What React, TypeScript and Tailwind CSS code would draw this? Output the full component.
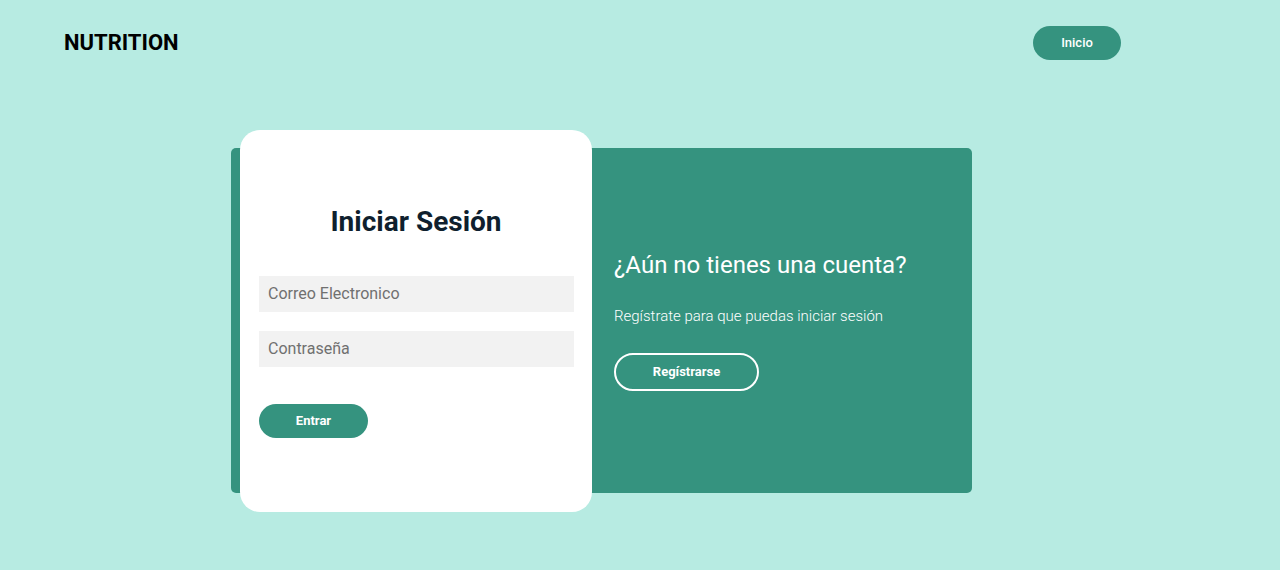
import React from "react";

export default function App() {
  return (
    <div className="min-h-[570px] w-full bg-[#b7ebe2] font-['Roboto',sans-serif]">
      <header className="flex h-[85px] items-center justify-between pl-16 pr-[159px]">
        <div className="text-[22px] font-bold leading-none text-black">NUTRITION</div>
        <button className="h-[34px] w-[88px] rounded-full bg-[#35937f] text-[13px] font-medium text-white">
          Inicio
        </button>
      </header>
      <div className="flex pl-[231px] pt-[63px]">
        <div className="flex h-[345px] w-[741px] items-center rounded-[5px] bg-[#35937f]">
          <div className="ml-[9px] flex h-[382px] w-[352px] shrink-0 flex-col rounded-[20px] bg-white px-[19px] pt-[75px]">
            <h1 className="text-center text-[28px] font-bold leading-[34px] text-[#0f1f2e]">
              Iniciar Sesión
            </h1>
            <input
              className="mt-[37px] h-[36px] w-[315px] bg-[#f2f2f2] px-[9px] text-[16px] text-gray-700 outline-none placeholder:text-[#707070]"
              placeholder="Correo Electronico"
            />
            <input
              type="password"
              className="mt-[19px] h-[36px] w-[315px] bg-[#f2f2f2] px-[9px] text-[16px] text-gray-700 outline-none placeholder:text-[#707070]"
              placeholder="Contraseña"
            />
            <button className="mt-[37px] h-[34px] w-[109px] rounded-full bg-[#35937f] text-[13px] font-bold text-white">
              Entrar
            </button>
          </div>
          <div className="flex flex-col pl-[22px] text-white">
            <h2 className="text-[24px] font-normal leading-[30px]">¿Aún no tienes una cuenta?</h2>
            <p className="mt-[26px] text-[15px] font-light leading-[20px]">
              Regístrate para que puedas iniciar sesión
            </p>
            <button className="mt-[27px] h-[38px] w-[145px] rounded-full border-2 border-white text-[13px] font-bold text-white">
              Regístrarse
            </button>
          </div>
        </div>
      </div>
    </div>
  );
}
